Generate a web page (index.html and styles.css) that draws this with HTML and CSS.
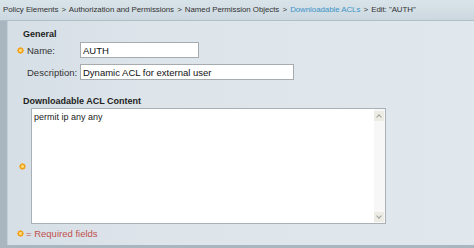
FILE: index.html
```html
<!DOCTYPE html>
<html lang="en">
<head>
    <meta charset="UTF-8">
    <title>Edit Downloadable ACL</title>
    <link rel="stylesheet" href="styles.css">
</head>
<body>

    <!-- Breadcrumb -->
    <div class="crumbs">
        <span>Policy Elements</span>
        <span class="sep">&gt;</span>
        <span>Authorization and Permissions</span>
        <span class="sep">&gt;</span>
        <span>Named Permission Objects</span>
        <span class="sep">&gt;</span>
        <span class="link">Downloadable ACLs</span>
        <span class="sep">&gt;</span>
        <span>Edit: "AUTH"</span>
    </div>

    <!-- Edit Form -->
    <div class="panel">
        <div class="section-title">General</div>
        <div class="row">
            <svg class="req" viewBox="0 0 8 8"><circle cx="4" cy="4" r="3.4" fill="#f0a020"/><path d="M4 0.2V1.6M4 6.4V7.8M0.2 4H1.6M6.4 4H7.8M1.3 1.3L2.3 2.3M5.7 5.7L6.7 6.7M6.7 1.3L5.7 2.3M1.3 6.7L2.3 5.7" stroke="#f4a41c" stroke-width="1"/><circle cx="4" cy="4" r="1.7" fill="#fbe27a"/></svg>
            <label class="lbl" for="name">Name:</label>
            <input type="text" id="name" class="field name-field" value="AUTH">
        </div>
        <div class="row">
            <span class="req"></span>
            <label class="lbl" for="desc">Description:</label>
            <input type="text" id="desc" class="field desc-field" value="Dynamic ACL for external user">
        </div>

        <div class="section-title acl-title">Downloadable ACL Content</div>
        <div class="acl-row">
            <svg class="req" viewBox="0 0 8 8"><circle cx="4" cy="4" r="3.4" fill="#f0a020"/><path d="M4 0.2V1.6M4 6.4V7.8M0.2 4H1.6M6.4 4H7.8M1.3 1.3L2.3 2.3M5.7 5.7L6.7 6.7M6.7 1.3L5.7 2.3M1.3 6.7L2.3 5.7" stroke="#f4a41c" stroke-width="1"/><circle cx="4" cy="4" r="1.7" fill="#fbe27a"/></svg>
            <div class="acl-box">
                <div class="acl-text">permit ip any any</div>
                <div class="scroll">
                    <span class="arrow up"></span>
                    <span class="arrow down"></span>
                </div>
            </div>
        </div>

        <div class="legend">
            <svg class="req" viewBox="0 0 8 8"><circle cx="4" cy="4" r="3.4" fill="#f0a020"/><path d="M4 0.2V1.6M4 6.4V7.8M0.2 4H1.6M6.4 4H7.8M1.3 1.3L2.3 2.3M5.7 5.7L6.7 6.7M6.7 1.3L5.7 2.3M1.3 6.7L2.3 5.7" stroke="#f4a41c" stroke-width="1"/><circle cx="4" cy="4" r="1.7" fill="#fbe27a"/></svg>
            <span>= Required fields</span>
        </div>
    </div>

</body>
</html>
```

FILE: styles.css
```css
/* Global Styles */
body {
    margin: 0;
    width: 474px;
    height: 248px;
    overflow: hidden;
    font-family: "Liberation Sans", Arial, sans-serif;
    background-color: #a9b5bf;
    color: #222;
}

/* Breadcrumb */
.crumbs {
    height: 21px;
    box-sizing: border-box;
    padding: 5px 0 0 3px;
    font-size: 7.9px;
    line-height: 10px;
    letter-spacing: -0.05px;
    color: #333;
    background: linear-gradient(#d9e3ea, #ccd8e0);
    border-bottom: 1px solid #b0bec8;
    white-space: nowrap;
}

.crumbs .sep {
    margin: 0 1px;
}

.crumbs .link {
    color: #3d93c6;
}

/* Panel */
.panel {
    height: 224px;
    margin-left: 7px;
    padding: 8px 0 0 9px;
    box-sizing: border-box;
    background: linear-gradient(90deg, #d6dfe6, #dde4ea 30%, #e0e7ed);
    border-left: 1px solid #c4cfd7;
}

.section-title {
    font-size: 9px;
    line-height: 11px;
    font-weight: bold;
    color: #222;
    margin-left: 6px;
}

.row {
    display: flex;
    align-items: center;
    height: 16px;
    margin-top: 2px;
    font-size: 9.5px;
}

.row + .row {
    margin-top: 6px;
}

.req {
    display: block;
    flex: none;
    width: 7px;
    height: 7px;
}

.lbl {
    width: 53px;
    margin-left: 3px;
    color: #333;
}

.field {
    height: 16px;
    box-sizing: border-box;
    padding: 0 2px;
    font-family: inherit;
    font-size: 9.5px;
    color: #111;
    border: 1px solid #a6abb0;
    background: #fff;
}

.name-field {
    width: 119px;
}

.desc-field {
    width: 214px;
}

/* ACL content */
.acl-title {
    margin-top: 16px;
}

.acl-row {
    display: flex;
    align-items: center;
    margin-top: 1px;
    margin-left: 2px;
}

.acl-box {
    display: flex;
    width: 355px;
    height: 116px;
    box-sizing: border-box;
    margin-left: 5px;
    border: 1px solid #a9b0b6;
    background: #fff;
}

.acl-text {
    flex: 1;
    padding: 3px 0 0 2px;
    font-size: 9px;
    line-height: 11px;
    color: #222;
}

.scroll {
    width: 11px;
    display: flex;
    flex-direction: column;
    justify-content: space-between;
    padding: 2px 0 1px;
    background: #f7f7f7;
}

.arrow {
    height: 10px;
    margin-right: 1px;
    background: #ecece4;
    position: relative;
}

.arrow::after {
    content: "";
    position: absolute;
    left: 3px;
    width: 3px;
    height: 3px;
    border-left: 1px solid #a0a0a0;
    border-top: 1px solid #a0a0a0;
}

.arrow.up::after {
    top: 4px;
    transform: rotate(45deg);
}

.arrow.down::after {
    top: 2px;
    transform: rotate(225deg);
}

.legend {
    display: flex;
    align-items: center;
    gap: 2px;
    margin-top: 4px;
    font-size: 9.5px;
    line-height: 11px;
    color: #c0504d;
}
```
